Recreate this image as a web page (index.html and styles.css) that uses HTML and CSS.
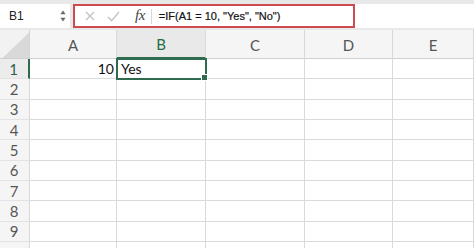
FILE: index.html
```html
<!DOCTYPE html>
<html>
<head>
<meta charset="utf-8">
<link rel="stylesheet" href="styles.css">
</head>
<body>
<div class="app">
  <div class="fbar">
    <div class="namebox">
      <span class="nb-text">B1</span>
      <svg class="spin" width="6" height="12" viewBox="0 0 6 12"><path d="M3 0.5 L5.6 4.2 L0.4 4.2 Z" fill="#6a6a6a"/><path d="M3 11.5 L5.6 7.8 L0.4 7.8 Z" fill="#6a6a6a"/></svg>
    </div>
    <div class="finput">
      <div class="hl">
        <svg class="ico-x" width="10" height="10" viewBox="0 0 10 10"><path d="M1 1 L9 9 M9 1 L1 9" stroke="#c4c4c4" stroke-width="1.4" fill="none"/></svg>
        <svg class="ico-ok" width="13" height="11" viewBox="0 0 13 11"><path d="M1 6 L4.6 9.6 L12 1" stroke="#c4c4c4" stroke-width="1.4" fill="none"/></svg>
        <span class="fx">fx</span>
        <span class="sep"></span>
        <span class="ftext">=IF(A1 = 10, "Yes", "No")</span>
      </div>
    </div>
  </div>
  <div class="sheet">
    <div class="corner"></div>
    <div class="ch">A</div>
    <div class="ch ch-sel">B</div>
    <div class="ch">C</div>
    <div class="ch">D</div>
    <div class="ch">E</div>

    <div class="rh rh-sel">1</div>
    <div class="c num">10</div>
    <div class="c sel">Yes</div>
    <div class="c"></div><div class="c"></div><div class="c"></div>

    <div class="rh">2</div><div class="c"></div><div class="c"></div><div class="c"></div><div class="c"></div><div class="c"></div>
    <div class="rh">3</div><div class="c"></div><div class="c"></div><div class="c"></div><div class="c"></div><div class="c"></div>
    <div class="rh">4</div><div class="c"></div><div class="c"></div><div class="c"></div><div class="c"></div><div class="c"></div>
    <div class="rh">5</div><div class="c"></div><div class="c"></div><div class="c"></div><div class="c"></div><div class="c"></div>
    <div class="rh">6</div><div class="c"></div><div class="c"></div><div class="c"></div><div class="c"></div><div class="c"></div>
    <div class="rh">7</div><div class="c"></div><div class="c"></div><div class="c"></div><div class="c"></div><div class="c"></div>
    <div class="rh">8</div><div class="c"></div><div class="c"></div><div class="c"></div><div class="c"></div><div class="c"></div>
    <div class="rh">9</div><div class="c"></div><div class="c"></div><div class="c"></div><div class="c"></div><div class="c"></div>
    <div class="rh"></div><div class="c"></div><div class="c"></div><div class="c"></div><div class="c"></div><div class="c"></div>
  </div>
</div>
</body>
</html>
```

FILE: styles.css
```css
* { box-sizing: border-box; }
html, body { margin: 0; padding: 0; background: #fff; }
.app { width: 474px; height: 248px; overflow: hidden; background: #fff; }

.fbar {
  height: 30px;
  background: #e8e8e8;
  padding: 4px 0 2px 0;
  display: flex;
  gap: 3px;
}
.namebox {
  width: 70px;
  height: 24px;
  background: #fff;
  display: flex;
  align-items: center;
  padding-left: 9px;
  padding-right: 4px;
  font-family: "Liberation Sans", Arial, sans-serif;
  font-size: 12px;
  color: #222;
}
.nb-text { flex: 1; }
.finput {
  flex: 1;
  height: 24px;
  background: #fff;
  display: flex;
}
.hl {
  width: 282px;
  height: 24px;
  border: 2px solid #cc4a52;
  display: flex;
  align-items: center;
  padding-left: 10px;
}
.ico-x { margin-right: 12px; }
.ico-ok { margin-right: 15px; }
.fx {
  font-family: "Liberation Serif", "DejaVu Serif", serif;
  font-style: italic;
  font-size: 15px;
  color: #444;
  letter-spacing: -0.5px;
  margin-right: 6px;
  position: relative;
  top: -1px;
}
.sep {
  width: 1px;
  height: 15px;
  background: #d6d6d6;
  margin-right: 7px;
}
.ftext {
  font-family: "Liberation Sans", Arial, sans-serif;
  font-size: 11px;
  color: #111;
  white-space: pre;
  -webkit-text-stroke: 0.2px #111;
}

.sheet {
  display: grid;
  grid-template-columns: 30px 87px 89px 99px 88px 1fr;
  grid-template-rows: 29px repeat(10, 20.33px);
  font-family: Lato, "Open Sans", sans-serif;
  font-size: 14px;
}
.corner {
  background: linear-gradient(to top left, #d9d9d9 0, #d9d9d9 45%, #f2f2f2 46%);
  border-right: 1px solid #d4d4d4;
  border-bottom: 1px solid #cfcfcf;
}
.ch {
  background: #f5f5f5;
  border-right: 1px solid #d8d8d8;
  border-bottom: 1px solid #cfcfcf;
  color: #555;
  font-size: 15px;
  display: flex;
  align-items: center;
  justify-content: center;
  padding-top: 1px;
}
.ch-sel {
  background: #e9e9e9;
  color: #1f6c45;
  border-bottom: 2px solid #2c6b4c;
}
.rh {
  background: #f5f5f5;
  border-right: 1px solid #d8d8d8;
  border-bottom: 1px solid #e3e3e3;
  color: #555;
  font-size: 15px;
  display: flex;
  align-items: center;
  justify-content: center;
  padding-right: 1px;
}
.rh-sel {
  color: #2b5e45;
  background: #ececec;
  border-right: 2px solid #2c6b4c;
}
.c {
  border-right: 1px solid #dadada;
  border-bottom: 1px solid #dadada;
  color: #111;
  display: flex;
  align-items: center;
  padding: 0 3px;
}
.num { justify-content: flex-end; padding-right: 2px; }
.sel {
  position: relative;
  outline: 2px solid #2f6c4f;
  outline-offset: -1px;
  padding-left: 4px;
}
.sel::after {
  content: "";
  position: absolute;
  right: -3px;
  bottom: -3px;
  width: 5px;
  height: 5px;
  background: #2f6c4f;
  border: 1px solid #fff;
}
```
